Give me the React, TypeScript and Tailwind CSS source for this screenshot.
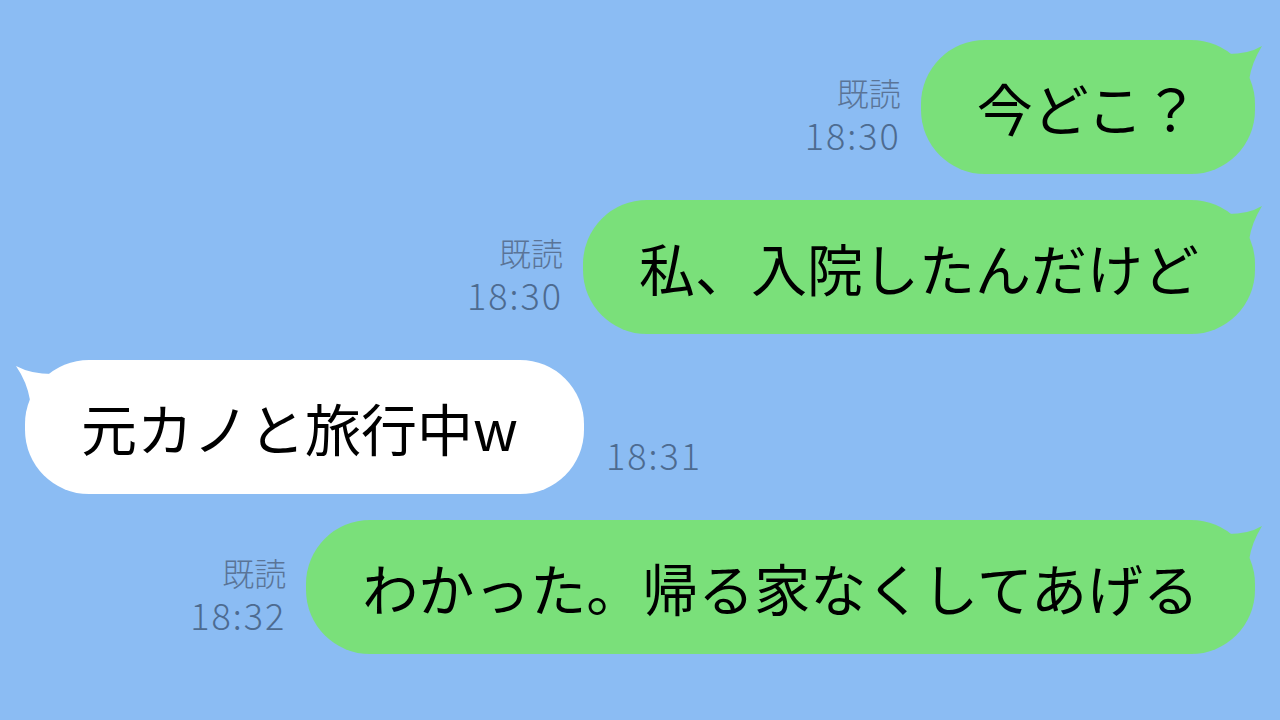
const FONT = { fontFamily: '"Noto Sans CJK JP", "Noto Sans", sans-serif' };

type Msg = {
  side: "me" | "them";
  text: string;
  time: string;
};

const MESSAGES: Msg[] = [
  { side: "me", text: "今どこ？", time: "18:30" },
  { side: "me", text: "私、入院したんだけど", time: "18:30" },
  { side: "them", text: "元カノと旅行中w", time: "18:31" },
  { side: "me", text: "わかった。帰る家なくしてあげる", time: "18:32" },
];

const Meta = ({ time, read }: { time: string; read: boolean }) => (
  <div className="flex flex-col items-end gap-[2px] pb-[18px] font-light text-[#4d6b90]">
    {read && <span className="text-[32px] leading-[36px] text-[#5a7497]">既読</span>}
    <span className="text-[36px] leading-[44px] tracking-[2px]">{time}</span>
  </div>
);

const Bubble = ({ msg }: { msg: Msg }) => {
  const mine = msg.side === "me";
  return (
    <div
      className={`relative flex h-[134px] items-center rounded-[64px] text-[56px] text-black ${
        mine ? "bg-[#7ae07a] px-[56px]" : "bg-white pl-[56px] pr-[66px]"
      }`}
    >
      {/* tail */}
      {mine ? (
        <svg className="absolute -right-[10px] top-0" width="50" height="50" viewBox="0 0 50 50">
          <path d="M8 14 Q32 15 47 6 Q37 22 34 40 L8 40 Z" fill="#7ae07a" />
        </svg>
      ) : (
        <svg className="absolute -left-[10px] top-0" width="50" height="50" viewBox="0 0 50 50">
          <path d="M42 14 Q18 15 1 6 Q12 22 15 40 L42 40 Z" fill="#ffffff" />
        </svg>
      )}
      <span className="relative leading-none">{msg.text}</span>
    </div>
  );
};

export default function App() {
  return (
    <div
      className="flex h-[720px] w-[1280px] flex-col gap-[26px] overflow-hidden bg-[#8bbcf3] px-[25px] pt-[40px]"
      style={FONT}
    >
      {MESSAGES.map((msg, i) =>
        msg.side === "me" ? (
          <div key={i} className="flex items-end justify-end gap-[20px]">
            <Meta time={msg.time} read />
            <Bubble msg={msg} />
          </div>
        ) : (
          <div key={i} className="flex items-end justify-start gap-[22px]">
            <Bubble msg={msg} />
            <Meta time={msg.time} read={false} />
          </div>
        ),
      )}
    </div>
  );
}
